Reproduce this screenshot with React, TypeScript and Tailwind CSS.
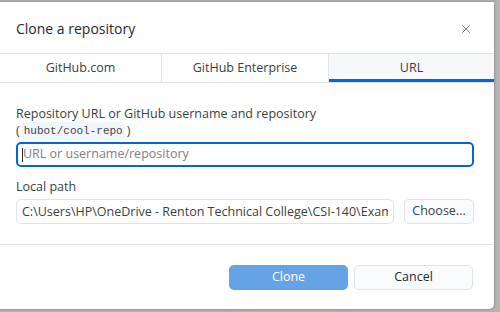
import { X } from 'lucide-react'

const font = { fontFamily: '"Segoe UI", "Open Sans", "Noto Sans", sans-serif' }

const Tab = ({ label, active, w }: { label: string; active?: boolean; w: string }) => (
  <div
    className={
      'relative flex items-center justify-center text-[12.5px] text-[#3a3f44] ' +
      w +
      (active ? ' bg-[#f6f8fa]' : ' bg-white border-r border-[#e1e4e8]')
    }
  >
    {label}
    {active && <div className="absolute bottom-0 left-0 right-0 h-[3px] bg-[#0366d6]"></div>}
  </div>
)

const App = () => {
  return (
    <div className="w-[500px] h-[312px] overflow-hidden bg-[#b4b4b4] pt-[2px]" style={font}>
      <div className="w-[494px] h-[307px] bg-white rounded-br-[5px] flex flex-col shadow-[0_0_3px_rgba(0,0,0,0.35)]">
        <div className="h-[52px] shrink-0 flex items-center justify-between pl-4 pr-[21px] pt-[2px] border-b border-[#e1e4e8]">
          <div className="text-[14px] text-[#24292e]">Clone a repository</div>
          <X size={14} strokeWidth={1.5} className="text-[#6a737d]" />
        </div>
        <div className="h-[29px] shrink-0 flex border-b border-[#e1e4e8]">
          <Tab label="GitHub.com" w="w-[162px]" />
          <Tab label="GitHub Enterprise" w="w-[167px]" />
          <Tab label="URL" w="flex-1" active />
        </div>
        <div className="flex flex-col px-4 pt-[22px] pb-[20px] border-b border-[#e1e4e8] text-[12.5px] text-[#3a3f44]">
          <div className="leading-[17px]">Repository URL or GitHub username and repository</div>
          <div className="leading-[18px] flex items-center">
            (
            <span className="mx-[2px] px-[2px] rounded-[5px] bg-[#f1f6fd] font-['Liberation_Mono',monospace] font-normal text-[11px] leading-[18px] text-[#444]">
              hubot/cool-repo
            </span>
            )
          </div>
          <div className="mt-[2px] h-[25px] w-[458px] rounded-[5px] border-2 border-[#0366d6] flex items-center px-[4px]">
            <span className="w-px h-[14px] bg-[#24292e]"></span>
            <span className="text-[#7a828a]">URL or username/repository</span>
          </div>
          <div className="mt-[11px] leading-[17px]">Local path</div>
          <div className="mt-[4px] flex gap-[10px]">
            <input
              readOnly
              value="C:\Users\HP\OneDrive - Renton Technical College\CSI-140\ExampleCode"
              className="w-[378px] h-[25px] rounded-[5px] border border-[#e1e4e8] px-[5px] text-[12.5px] text-[#3a3f44] outline-none"
              style={font}
            />
            <div className="w-[70px] h-[25px] rounded-[5px] border border-[#e1e4e8] bg-[#fafbfc] flex items-center justify-center">
              Choose...
            </div>
          </div>
        </div>
        <div className="flex justify-end gap-[6px] pr-[21px] pt-[20px]">
          <div className="w-[119px] h-[25px] rounded-[5px] bg-[#66a3e4] text-white text-[12.5px] flex items-center justify-center">
            Clone
          </div>
          <div className="w-[119px] h-[25px] rounded-[5px] border border-[#e1e4e8] bg-[#fafbfc] text-[#24292e] text-[12.5px] flex items-center justify-center">
            Cancel
          </div>
        </div>
      </div>
    </div>
  )
}

export default App
